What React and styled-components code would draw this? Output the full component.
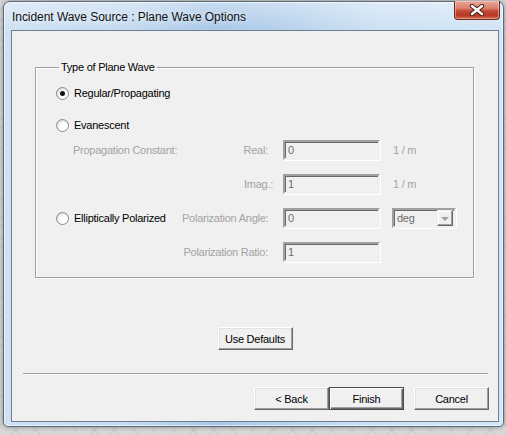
import React from 'react';
import styled, { createGlobalStyle, css } from 'styled-components';

const GlobalStyle = createGlobalStyle`
  html, body {
    margin: 0;
    padding: 0;
  }
  body {
    width: 506px;
    height: 435px;
    overflow: hidden;
    background-color: #d8d8d8;
    background-image:
      repeating-linear-gradient(45deg, rgba(0,0,0,0.05) 0 1px, transparent 1px 14px),
      repeating-linear-gradient(-45deg, rgba(0,0,0,0.05) 0 1px, transparent 1px 14px);
    font-family: "Liberation Sans", Arial, sans-serif;
  }
`;

const Window = styled.div`
  box-sizing: border-box;
  width: 501px;
  height: 426px;
  margin: 1px 0 0 3px;
  padding: 0 4px 4px 7px;
  display: flex;
  flex-direction: column;
  border: 1px solid #5a6b7c;
  border-radius: 7px 7px 5px 5px;
  background:
    linear-gradient(180deg, rgba(255,255,255,0.35) 0, rgba(255,255,255,0) 28px),
    linear-gradient(90deg, #cfe1f3 0%, #c4daf0 25%, #a9c8e7 42%, #b5d0ec 55%, #cde1f4 75%, #d3e5f6 100%);
  box-shadow: 0 0 5px rgba(0, 0, 0, 0.4), inset 0 0 0 1px rgba(255, 255, 255, 0.6);
`;

const TitleBar = styled.div`
  height: 28px;
  display: flex;
  justify-content: space-between;
  align-items: flex-start;
  padding-left: 1px;
`;

const Title = styled.div`
  line-height: 30px;
  font-size: 12px;
  letter-spacing: -0.05px;
  color: #101010;
  text-shadow: 0 0 6px rgba(255, 255, 255, 0.9);
`;

const CloseButton = styled.div`
  width: 46px;
  height: 19px;
  margin: -1px -1px 0 0;
  display: flex;
  align-items: center;
  justify-content: center;
  box-sizing: border-box;
  border: 1px solid #6e2a22;
  border-top: none;
  border-radius: 0 0 4px 4px;
  background: linear-gradient(180deg, #e9a99c 0%, #d9806f 40%, #c14a35 55%, #b83a26 80%, #cf6b4f 100%);
  box-shadow: inset 0 0 0 1px rgba(255, 220, 210, 0.45);
`;

const Client = styled.div`
  flex: 1;
  display: flex;
  flex-direction: column;
  border: 1px solid #6d7f92;
  background: #f0f0f0;
  font-size: 11px;
  letter-spacing: -0.25px;
  color: #000;
`;

const Group = styled.fieldset`
  box-sizing: border-box;
  width: 439px;
  margin: 30px 0 0 23px;
  padding: 9px 0 15px 20px;
  border: 1px solid #a0a0a0;
  box-shadow: inset 1px 1px 0 #fff, 1px 1px 0 #fff;
  min-inline-size: 0;
`;

const Legend = styled.legend`
  margin-left: 3px;
  padding: 0 2px;
  line-height: 13px;
  font-size: 11px;
`;

const Row = styled.div`
  height: 20px;
  margin-top: ${p => p.$gap || 0}px;
  display: grid;
  grid-template-columns: 126px 101px 97px auto;
  align-items: center;
`;

const RadioOption = styled.label`
  grid-column: ${p => (p.$wide ? '1 / -1' : '1')};
  display: flex;
  align-items: center;
  gap: 5px;
  white-space: nowrap;
`;

const RadioDot = styled.span`
  box-sizing: border-box;
  width: 13px;
  height: 13px;
  border-radius: 50%;
  border: 1px solid #8a8a8a;
  background: radial-gradient(circle at 60% 65%, #ffffff 0 40%, #dcdcdc 75%, #c4c4c4 100%);
  display: flex;
  align-items: center;
  justify-content: center;
  flex-shrink: 0;
  &::after {
    content: '';
    width: 5px;
    height: 5px;
    border-radius: 50%;
    background: ${p => (p.$checked ? '#111' : 'transparent')};
  }
`;

const Caption = styled.span`
  color: #a3a3a3;
  white-space: nowrap;
  ${p => p.$indent && css`padding-left: 17px;`}
`;

const FieldLabel = styled.span`
  color: #a3a3a3;
  text-align: right;
  white-space: nowrap;
  padding-right: ${p => (p.$tight ? 10 : 15)}px;
`;

const sunken = css`
  box-sizing: border-box;
  height: 20px;
  border-style: solid;
  border-width: 2px;
  border-color: #a0a0a0 #f0f0f0 #f0f0f0 #a0a0a0;
  box-shadow: inset 1px 1px 0 #696969, 1px 1px 0 #fff;
  background: #f0f0f0;
`;

const Field = styled.div`
  ${sunken}
  width: 97px;
  padding-left: 3px;
  line-height: 16px;
  color: #6d6d6d;
`;

const Unit = styled.span`
  margin-left: 13px;
  color: #a3a3a3;
  white-space: nowrap;
`;

const Select = styled.div`
  ${sunken}
  width: 64px;
  margin-left: 12px;
  display: flex;
  align-items: center;
  justify-content: space-between;
  padding: 0 1px 0 3px;
  color: #6d6d6d;
`;

const SelectArrow = styled.span`
  box-sizing: border-box;
  width: 16px;
  height: 16px;
  display: flex;
  align-items: center;
  justify-content: center;
  border: 1px solid;
  border-color: #f0f0f0 #696969 #696969 #f0f0f0;
  box-shadow: inset -1px -1px 0 #a0a0a0, inset 1px 1px 0 #fff;
  &::after {
    content: '';
    border-left: 4px solid transparent;
    border-right: 4px solid transparent;
    border-top: 4px solid #a0a0a0;
    margin-top: 1px;
  }
`;

const DefaultsRow = styled.div`
  display: flex;
  justify-content: center;
  margin-top: 49px;
`;

const Button = styled.button`
  box-sizing: border-box;
  width: 75px;
  height: 23px;
  padding: 0;
  font-family: inherit;
  font-size: 11px;
  letter-spacing: -0.25px;
  color: #000;
  background: #f0f0f0;
  border: 1px solid;
  border-color: #fff #696969 #696969 #fff;
  box-shadow: inset -1px -1px 0 #a0a0a0, inset 1px 1px 0 #e3e3e3;
  margin-left: ${p => p.$gap || 0}px;
  ${p => p.$default && css`
    border: 1px solid #4a4a4a;
    box-shadow: inset 1px 1px 0 #fff, inset -1px -1px 0 #696969, inset -2px -2px 0 #a0a0a0;
  `}
`;

const Separator = styled.div`
  margin: 23px 10px 0 11px;
  height: 0;
  border-top: 1px solid #a0a0a0;
  border-bottom: 1px solid #fff;
`;

const ButtonRow = styled.div`
  display: flex;
  justify-content: flex-end;
  margin-top: 12px;
  padding-right: 9px;
`;

const CloseGlyph = () => (
  <svg width="16" height="12" viewBox="0 0 16 12">
    <path d="M3 2 L13 10 M13 2 L3 10" stroke="#4a1c14" strokeWidth="4.4" strokeLinecap="round" />
    <path d="M3 2 L13 10 M13 2 L3 10" stroke="#fff" strokeWidth="2.4" strokeLinecap="round" />
  </svg>
);

const App = () => (
  <>
    <GlobalStyle />
    <Window>
      <TitleBar>
        <Title>Incident Wave Source : Plane Wave Options</Title>
        <CloseButton>
          <CloseGlyph />
        </CloseButton>
      </TitleBar>
      <Client>
        <Group>
          <Legend>Type of Plane Wave</Legend>
          <Row>
            <RadioOption $wide>
              <RadioDot $checked />
              Regular/Propagating
            </RadioOption>
          </Row>
          <Row $gap={12}>
            <RadioOption $wide>
              <RadioDot />
              Evanescent
            </RadioOption>
          </Row>
          <Row $gap={5}>
            <Caption $indent>Propagation Constant:</Caption>
            <FieldLabel>Real:</FieldLabel>
            <Field>0</Field>
            <Unit>1 / m</Unit>
          </Row>
          <Row $gap={14}>
            <span />
            <FieldLabel $tight>Imag.:</FieldLabel>
            <Field>1</Field>
            <Unit>1 / m</Unit>
          </Row>
          <Row $gap={14}>
            <RadioOption>
              <RadioDot />
              Elliptically Polarized
            </RadioOption>
            <FieldLabel>Polarization Angle:</FieldLabel>
            <Field>0</Field>
            <Select>
              deg
              <SelectArrow />
            </Select>
          </Row>
          <Row $gap={14}>
            <span />
            <FieldLabel>Polarization Ratio:</FieldLabel>
            <Field>1</Field>
          </Row>
        </Group>
        <DefaultsRow>
          <Button>Use Defaults</Button>
        </DefaultsRow>
        <Separator />
        <ButtonRow>
          <Button>&lt; Back</Button>
          <Button $default>Finish</Button>
          <Button $gap={10}>Cancel</Button>
        </ButtonRow>
      </Client>
    </Window>
  </>
);

export default App;
